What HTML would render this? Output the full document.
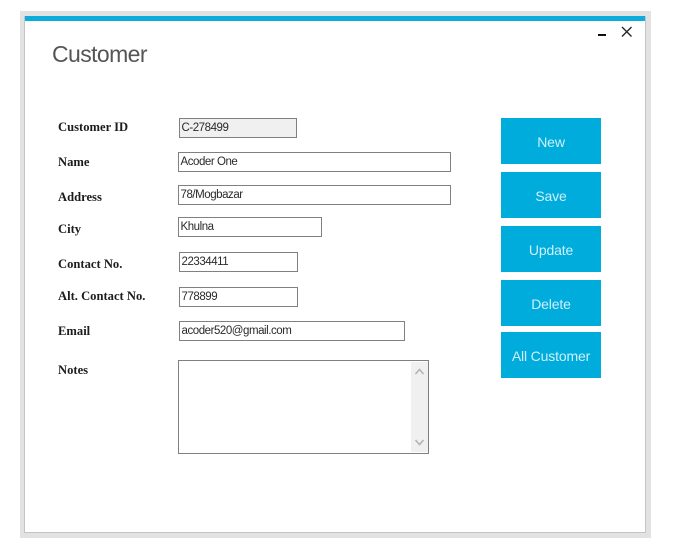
<!DOCTYPE html>
<html>
<head>
<meta charset="utf-8">
<style>
html,body{margin:0;padding:0;background:#fff;}
body{position:relative;width:695px;height:553px;overflow:hidden;}
.a{position:absolute;box-sizing:border-box;}
.l{position:absolute;font:bold 12.600px/14px "Liberation Serif",serif;color:#1c1c1c;white-space:nowrap;}
.i{position:absolute;box-sizing:border-box;height:20px;border:1px solid #808080;background:#fff;font:11.500px/19px "Liberation Sans",sans-serif;letter-spacing:-.45px;color:#2a2a2a;padding-left:1.500px;white-space:nowrap;overflow:hidden;}
.b{position:absolute;left:501px;width:100px;height:46px;background:#00acdc;color:#cdf0fa;font:14px/48px "Liberation Sans",sans-serif;letter-spacing:-.15px;text-align:center;white-space:nowrap;}
</style>
</head>
<body>
<div class="a" style="left:20px;top:11px;width:631px;height:527px;background:#e2e2e2;"></div>
<div class="a" style="left:24px;top:16px;width:622px;height:517px;background:#fff;border:1px solid #c4c4c4;border-top:0;"></div>
<div class="a" style="left:25px;top:16px;width:620px;height:5px;background:#0cacdc;"></div>

<div class="l" style="left:52px;top:40px;font:normal 23px/28px 'Liberation Sans',sans-serif;color:#555;letter-spacing:-.6px;">Customer</div>

<svg class="a" style="left:590px;top:20px;" width="50" height="25" viewBox="0 0 50 25">
<rect x="8" y="14" width="8" height="2" fill="#111"/>
<path d="M32 7L41.500 16.500M41.500 7L32 16.500" stroke="#222" stroke-width="1.300" fill="none"/>
</svg>

<div class="l" style="left:58px;top:120px;">Customer ID</div>
<div class="l" style="left:58px;top:155px;">Name</div>
<div class="l" style="left:58px;top:190px;">Address</div>
<div class="l" style="left:58px;top:222px;">City</div>
<div class="l" style="left:58px;top:257px;">Contact No.</div>
<div class="l" style="left:58px;top:289px;">Alt. Contact No.</div>
<div class="l" style="left:58px;top:324px;">Email</div>
<div class="l" style="left:58px;top:363px;">Notes</div>

<div class="i" style="left:179px;top:118px;width:118px;background:#f0f0f0;">C-278499</div>
<div class="i" style="left:178px;top:152px;width:273px;">Acoder One</div>
<div class="i" style="left:178px;top:185px;width:273px;">78/Mogbazar</div>
<div class="i" style="left:178px;top:217px;width:144px;">Khulna</div>
<div class="i" style="left:179px;top:252px;width:119px;">22334411</div>
<div class="i" style="left:179px;top:287px;width:119px;">778899</div>
<div class="i" style="left:179px;top:321px;width:226px;">acoder520@gmail.com</div>

<div class="a" style="left:178px;top:360px;width:251px;height:94px;border:1px solid #808080;background:#fff;"></div>
<div class="a" style="left:411px;top:362px;width:17px;height:90px;background:#f0f0f0;"></div>
<svg class="a" style="left:411px;top:362px;" width="17" height="90" viewBox="0 0 17 90">
<path d="M4.500 12L8.500 7.500L12.500 12" stroke="#b4b4b4" stroke-width="1.600" fill="none"/>
<path d="M4.500 78L8.500 82.500L12.500 78" stroke="#b4b4b4" stroke-width="1.600" fill="none"/>
</svg>

<div class="b" style="top:118px;">New</div>
<div class="b" style="top:172px;">Save</div>
<div class="b" style="top:226px;">Update</div>
<div class="b" style="top:280px;">Delete</div>
<div class="b" style="top:332px;">All Customer</div>
</body>
</html>
